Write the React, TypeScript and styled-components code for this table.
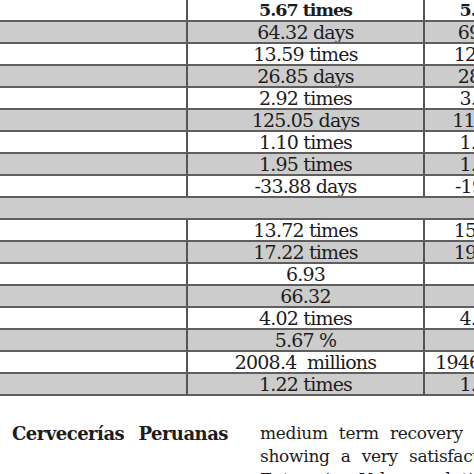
import styled, { createGlobalStyle } from "styled-components";

const GlobalStyle = createGlobalStyle`
	html, body {
		margin: 0;
		padding: 0;
		background: #ffffff;
		overflow: hidden;
	}
	body {
		font-family: "DejaVu Serif", "Liberation Serif", serif;
		color: #1c1c1c;
	}
`;

const Page = styled.div`
	width: 474px;
	height: 474px;
	overflow: hidden;
`;

const Table = styled.div`
	display: flex;
	flex-direction: column;
	width: 587px;
`;

const Row = styled.div<{ $shaded: boolean }>`
	display: grid;
	grid-template-columns: 188px 237px 162px;
	height: 22px;
	box-sizing: border-box;
	border-bottom: 2px solid #5e5e5e;
	background-color: ${props => (props.$shaded ? "#cccccc" : "#ffffff")};
`;

const SpanRow = styled.div`
	height: 22px;
	box-sizing: border-box;
	border-bottom: 2px solid #5e5e5e;
	background-color: #cccccc;
`;

const Cell = styled.div<{ $bold?: boolean; $divider?: boolean }>`
	box-sizing: border-box;
	border-right: ${props => (props.$divider ? "2px solid #555555" : "none")};
	text-align: center;
	white-space: nowrap;
	overflow: hidden;
	line-height: 20px;
	font-size: ${props => (props.$bold ? "17.5px" : "19px")};
	font-weight: ${props => (props.$bold ? 700 : 400)};
	letter-spacing: ${props => (props.$bold ? "-1px" : "-0.8px")};
`;

const Body = styled.div`
	display: grid;
	grid-template-columns: 216px 320px;
	column-gap: 32px;
	padding: 26px 0 0 12px;
`;

const Heading = styled.div`
	font-size: 18px;
	font-weight: 700;
	line-height: 23px;
	letter-spacing: -0.5px;
	white-space: nowrap;
	display: flex;
	justify-content: space-between;
`;

const Lines = styled.div`
	font-size: 17px;
	line-height: 23px;
	letter-spacing: -0.3px;
	word-spacing: 6px;
	white-space: nowrap;
`;

type Line = { left: string; right: string; bold?: boolean; full?: boolean };

const rows: Line[] = [
	{ left: "5.67 times", right: "5.89 times", bold: true },
	{ left: "64.32 days", right: "69.80 days" },
	{ left: "13.59 times", right: "12.47 times" },
	{ left: "26.85 days", right: "28.87 days" },
	{ left: "2.92 times", right: "3.06 times" },
	{ left: "125.05 days", right: "118.12 days" },
	{ left: "1.10 times", right: "1.07 times" },
	{ left: "1.95 times", right: "1.89 times" },
	{ left: "-33.88 days", right: "-19.45 days" },
	{ left: "", right: "", full: true },
	{ left: "13.72 times", right: "15.11 times" },
	{ left: "17.22 times", right: "19.05 times" },
	{ left: "6.93", right: "7.12" },
	{ left: "66.32", right: "70.15" },
	{ left: "4.02 times", right: "4.11 times" },
	{ left: "5.67 %", right: "5.84 %" },
	{ left: "2008.4  millions", right: "1946.2  millions" },
	{ left: "1.22 times", right: "1.19 times" },
];

function App() {
	return (
		<Page>
			<GlobalStyle />
			<Table>
				{rows.map((row, i) =>
					row.full ? (
						<SpanRow key={i} />
					) : (
						<Row key={i} $shaded={i % 2 === 1}>
							<Cell $divider />
							<Cell $divider $bold={row.bold}>
								{row.left.replace("  ", "\u00a0 ")}
							</Cell>
							<Cell $bold={row.bold}>{row.right.replace("  ", "\u00a0 ")}</Cell>
						</Row>
					)
				)}
			</Table>
			<Body>
				<Heading>
					<span>Cervecerías</span>
					<span>Peruanas</span>
				</Heading>
				<Lines>
					<div>medium term recovery and growth</div>
					<div>showing a very satisfactory</div>
					<div>Enterprise Value evolution</div>
				</Lines>
			</Body>
		</Page>
	);
}

export default App;
